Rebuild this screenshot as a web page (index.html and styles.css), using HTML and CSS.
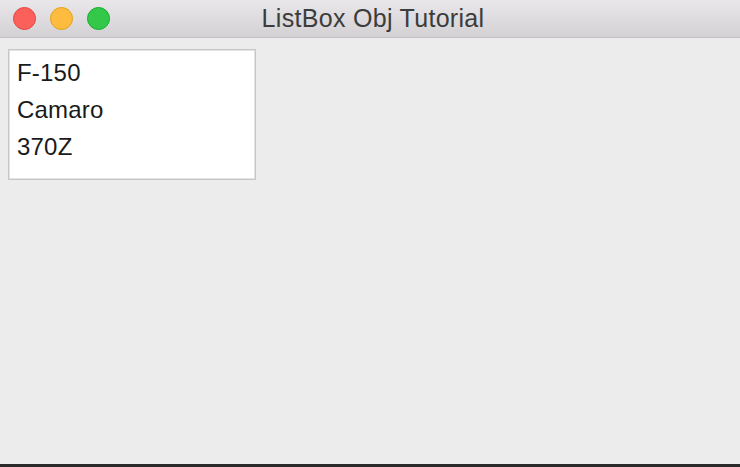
FILE: index.html
```html
<!DOCTYPE html>
<html>
<head>
<meta charset="utf-8">
<link rel="stylesheet" href="styles.css">
</head>
<body>
<div class="window">
  <div class="titlebar">
    <div class="lights">
      <span class="light red"></span>
      <span class="light yellow"></span>
      <span class="light green"></span>
    </div>
    <div class="title">ListBox Obj Tutorial</div>
  </div>
  <div class="content">
    <ul class="listbox">
      <li>F-150</li>
      <li>Camaro</li>
      <li>370Z</li>
    </ul>
  </div>
  <div class="bottom"></div>
</div>
</body>
</html>
```
FILE: styles.css
```css
html, body {
  margin: 0;
  padding: 0;
}
body {
  width: 740px;
  height: 467px;
  overflow: hidden;
  font-family: "Liberation Sans", Arial, sans-serif;
}
.window {
  display: flex;
  flex-direction: column;
  height: 467px;
  background: #ececec;
}
.titlebar {
  position: relative;
  height: 37px;
  flex: none;
  border-bottom: 1px solid #c2c0c2;
  background: linear-gradient(#e9e7e9, #d3d1d3);
}
.lights {
  position: absolute;
  left: 13px;
  top: 7px;
  display: flex;
  gap: 14px;
}
.light {
  width: 21px;
  height: 21px;
  border-radius: 50%;
  border: 1px solid;
}
.red { background: #fc605b; border-color: #e2463f; }
.yellow { background: #fdbc40; border-color: #e1a116; }
.green { background: #34c84a; border-color: #14ae29; }
.title {
  text-align: center;
  font-size: 25px;
  letter-spacing: 0.3px;
  line-height: 37px;
  color: #3c3c3c;
  padding-left: 6px;
}
.content {
  flex: 1;
  padding: 11px 0 0 8px;
}
.listbox {
  list-style: none;
  margin: 0;
  height: 125px;
  padding: 4px 0 0 8px;
  box-sizing: content-box;
  width: 238px;
  background: #fff;
  border: 1px solid #c6c6c6;
  box-shadow: inset 0 0 0 1px #e4e4e4;
}
.listbox li {
  font-size: 24px;
  letter-spacing: 0.2px;
  line-height: 37px;
  color: #1a1a1a;
}
.bottom {
  height: 3px;
  flex: none;
  background: #2a2a2a;
}
```
